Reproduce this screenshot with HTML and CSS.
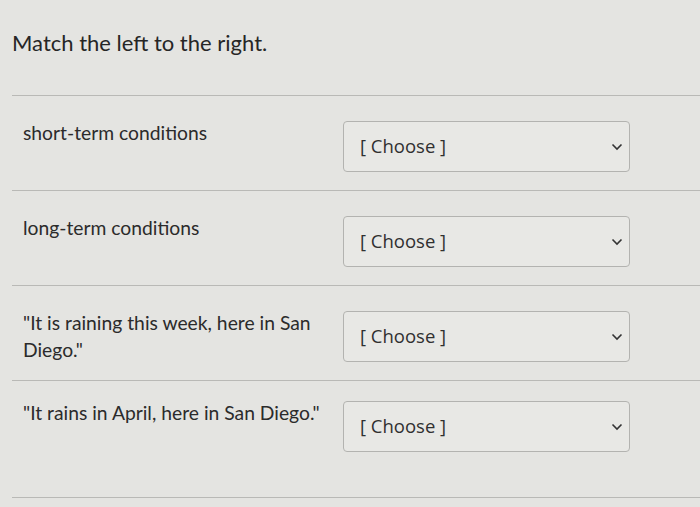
FILE: index.html
```html
<!DOCTYPE html>
<html>
<head>
<meta charset="utf-8">
<link rel="stylesheet" href="styles.css">
</head>
<body>
<div class="page">
  <h1 class="title">Match the left to the right.</h1>
  <div class="rows">
    <div class="row">
      <div class="label">short-term conditions</div>
      <div class="select"><span>[ Choose ]</span><svg class="chev" width="12" height="8" viewBox="0 0 12 8"><path d="M1.5 1.5 L6 6 L10.5 1.5" fill="none" stroke="#333" stroke-width="1.6"/></svg></div>
    </div>
    <div class="row">
      <div class="label">long-term conditions</div>
      <div class="select"><span>[ Choose ]</span><svg class="chev" width="12" height="8" viewBox="0 0 12 8"><path d="M1.5 1.5 L6 6 L10.5 1.5" fill="none" stroke="#333" stroke-width="1.6"/></svg></div>
    </div>
    <div class="row">
      <div class="label">"It is raining this week, here in San Diego."</div>
      <div class="select"><span>[ Choose ]</span><svg class="chev" width="12" height="8" viewBox="0 0 12 8"><path d="M1.5 1.5 L6 6 L10.5 1.5" fill="none" stroke="#333" stroke-width="1.6"/></svg></div>
    </div>
    <div class="row last">
      <div class="label">"It rains in April, here in San Diego."</div>
      <div class="select"><span>[ Choose ]</span><svg class="chev" width="12" height="8" viewBox="0 0 12 8"><path d="M1.5 1.5 L6 6 L10.5 1.5" fill="none" stroke="#333" stroke-width="1.6"/></svg></div>
    </div>
  </div>
</div>
</body>
</html>
```
FILE: styles.css
```css
html, body {
  margin: 0;
  padding: 0;
  background: #e4e4e1;
}
body {
  font-family: Lato, "Liberation Sans", sans-serif;
  color: #2b2b2b;
  width: 700px;
  height: 507px;
  overflow: hidden;
}
.page {
  padding-left: 12px;
}
.title {
  margin: 0;
  height: 95px;
  box-sizing: border-box;
  padding-top: 28px;
  font-size: 22px;
  font-weight: 400;
  line-height: 30px;
  color: #262626;
}
.rows {
  border-top: 1px solid #b9b9b6;
}
.row {
  display: flex;
  align-items: flex-start;
  height: 95px;
  box-sizing: border-box;
  padding-top: 25px;
  border-bottom: 1px solid #b9b9b6;
}
.row.last {
  height: 117px;
  padding-top: 20px;
}
.label {
  width: 331px;
  box-sizing: border-box;
  padding-left: 11px;
  padding-right: 20px;
  font-size: 19.3px;
  line-height: 27px;
  margin-top: -2px;
}
.select {
  width: 287px;
  height: 51px;
  box-sizing: border-box;
  border: 1px solid #b3b3b0;
  border-radius: 4px;
  background: #e8e8e5;
  display: flex;
  align-items: center;
  justify-content: space-between;
  padding: 0 6px 0 16px;
  font-family: "Open Sans", "Noto Sans", sans-serif;
  font-size: 18.5px;
  color: #303030;
}
.select span {
  margin-top: -2px;
}
.chev {
  display: block;
}
```
